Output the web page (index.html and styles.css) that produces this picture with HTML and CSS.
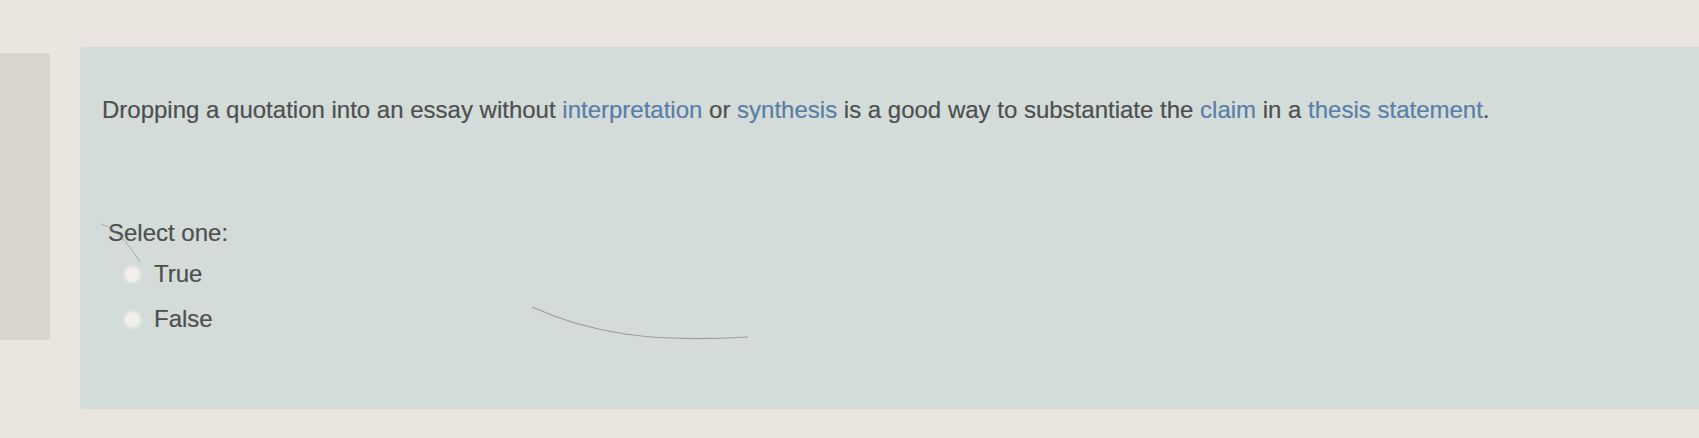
FILE: index.html
```html
<!DOCTYPE html>
<html lang="en">
<head>
<meta charset="utf-8">
<title>Question</title>
<link rel="stylesheet" href="styles.css">
</head>
<body>
<div class="page">
  <div class="side-tab"></div>
  <div class="question">
    <p class="qtext">Dropping a quotation into an essay without <span class="term">interpretation</span> or <span class="term">synthesis</span> is a good way to substantiate the <span class="term">claim</span> in a <span class="term">thesis statement</span>.</p>
    <div class="answer">
      <div class="prompt">Select one:</div>
      <label class="option"><span class="radio"></span><span>True</span></label>
      <label class="option"><span class="radio"></span><span>False</span></label>
    </div>
    <svg class="scratch" width="220" height="40" viewBox="0 0 220 40"><path d="M2 4 C 60 30, 120 40, 218 34" fill="none" stroke="#9a9f9e" stroke-width="1.2"/></svg>
    <svg class="scratch-small" width="44" height="44" viewBox="0 0 44 44"><path d="M1 2 C 14 6, 26 18, 40 40" fill="none" stroke="#8e9493" stroke-width="0.9" opacity="0.7"/></svg>
  </div>
</div>
</body>
</html>
```
FILE: styles.css
```css
html, body {
  margin: 0;
  padding: 0;
}
body {
  background: #eae6df;
  width: 1699px;
  height: 438px;
  overflow: hidden;
  font-family: "Liberation Sans", Arial, sans-serif;
}
.page {
  display: flex;
  align-items: flex-start;
  height: 438px;
}
.side-tab {
  width: 50px;
  height: 287px;
  margin-top: 53px;
  background: #d8d5cf;
  border-radius: 0 3px 3px 0;
  flex: none;
}
.question {
  position: relative;
  margin-left: 30px;
  margin-top: 47px;
  height: 362px;
  flex: 1;
  margin-right: -10px;
  background: #d3dcd9;
  border-radius: 4px 0 0 4px;
  padding: 49px 0 0 22px;
  box-sizing: border-box;
  color: #4d504f;
  -webkit-text-stroke: 0.2px currentColor;
}
.qtext {
  margin: 0;
  font-size: 24px;
  line-height: 28px;
  white-space: nowrap;
}
.term {
  color: #5a7ea7;
}
.answer {
  margin-top: 95px;
  padding-left: 6px;
  font-size: 24px;
}
.prompt {
  line-height: 28px;
}
.option {
  display: flex;
  align-items: center;
  gap: 13px;
  padding-left: 16px;
  height: 42px;
  line-height: 28px;
}
.prompt + .option {
  margin-top: 6px;
}
.option + .option {
  margin-top: 3px;
}
.radio {
  width: 17px;
  height: 17px;
  border-radius: 50%;
  background: #f0efec;
  box-shadow: inset 0 0 0 1px #dcdedc, 0 0 3px rgba(255,255,255,0.7);
  flex: none;
}
.scratch {
  position: absolute;
  left: 450px;
  top: 256px;
}
.scratch-small {
  position: absolute;
  left: 20px;
  top: 175px;
}
```
